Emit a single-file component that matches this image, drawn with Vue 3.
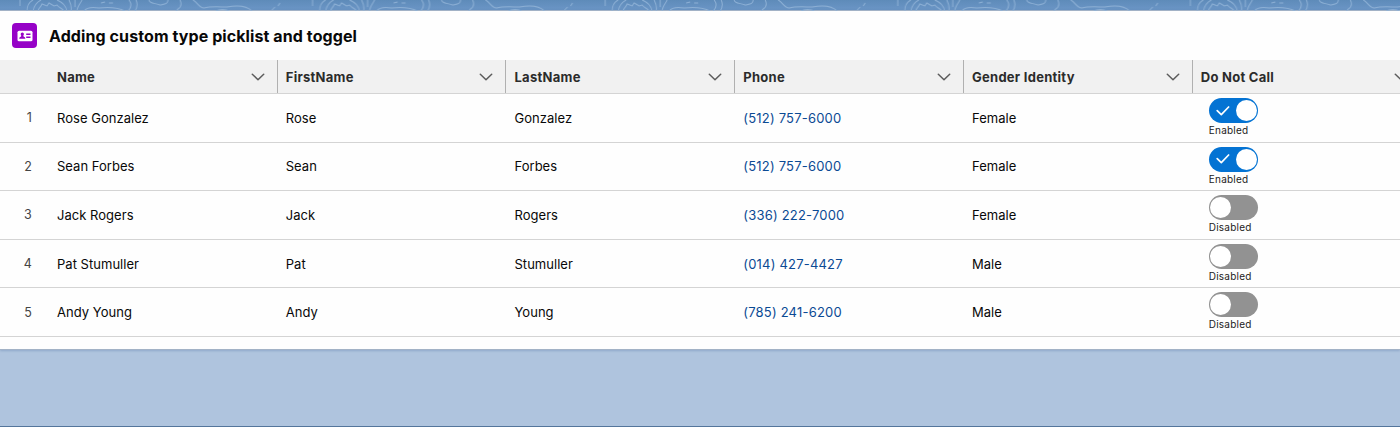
<template>
  <div class="page">
    <div class="banner">
      <svg width="1400" height="11" viewBox="0 0 1400 11">
        <defs>
          <pattern id="topo" x="0" y="0" width="292.6" height="11" patternUnits="userSpaceOnUse">
            <g fill="none" stroke="#8db0d5" stroke-width="1">
              <path d="M20 0v6M27 11C27 6 29 2 33 0M33 11C34 6 37 2 41 0M38 11C39 7 41 7 42 4L47 6L49 3L54 6L57 5C59 8 62 8 64 11M57 0C62 2 66 6 67 11" />
              <path d="M69 0C71 4 72 7 71 11M75 0v7M82 0C80 4 77 7 77 11M101 3l4-1M109 3h4M84 11C87 7 93 7 99 8C108 7 119 8 125 11M129 0C132 4 131 8 128 11M136 0C138 4 137 8 135 11" />
              <path d="M149 0C149 4 156 3 160 5C165 4 168 4 168 0M180 0C182 4 181 7 178 9L176 11M193 0C198 3 199 8 204 8C211 6 220 7 227 7C238 5 247 6 252 11M216 11C219 9 226 9 229 11M272 10l3-3M278 6l2-3" />
            </g>
          </pattern>
        </defs>
        <rect width="1400" height="11" fill="url(#topo)" />
      </svg>
    </div>

    <div class="card">
      <header class="card-header">
        <span class="card-icon">
          <svg width="16" height="12" viewBox="0 0 16 12">
            <rect x="0.5" y="0.7" width="15" height="10.6" rx="1.6" fill="#fff" />
            <path d="M5.3 2.4a1.6 1.6 0 0 1 1.6 1.7c0 1-.6 1.5-.6 2 0 .8 2.1.7 2.1 2.7H2.2c0-2 2.1-1.9 2.1-2.7 0-.5-.6-1-.6-2a1.6 1.6 0 0 1 1.6-1.7z" fill="#9602c7" />
            <path d="M9.2 4.3h4.3M9.2 7.2h4.3" stroke="#9602c7" stroke-width="1.5" />
          </svg>
        </span>
        <h2>Adding custom type picklist and toggel</h2>
      </header>

      <div class="table">
        <div class="row head">
          <div class="num"></div>
          <div v-for="col in columns" :key="col" class="th">
            <span>{{ col }}</span>
            <svg class="chevron" width="14" height="8" viewBox="0 0 14 8">
              <path d="M1.3 1.2L7 6.7l5.7-5.5" fill="none" stroke="#5c5c5c" stroke-width="1.5" stroke-linecap="round" stroke-linejoin="round" />
            </svg>
          </div>
        </div>

        <div v-for="(row, index) in rows" :key="row.name" class="row">
          <div class="num">{{ index + 1 }}</div>
          <div class="td">{{ row.name }}</div>
          <div class="td">{{ row.firstName }}</div>
          <div class="td">{{ row.lastName }}</div>
          <div class="td"><a class="phone">{{ row.phone }}</a></div>
          <div class="td">{{ row.gender }}</div>
          <div class="td toggle-cell" @click="row.doNotCall = !row.doNotCall">
            <span class="toggle" :class="{ on: row.doNotCall }">
              <svg v-if="row.doNotCall" class="check" width="14" height="10" viewBox="0 0 14 10">
                <path d="M1.2 4.6l4.1 4L12.6 1" fill="none" stroke="#fff" stroke-width="1.7" stroke-linecap="round" stroke-linejoin="round" />
              </svg>
              <span class="knob"></span>
            </span>
            <span class="toggle-label">{{ row.doNotCall ? 'Enabled' : 'Disabled' }}</span>
          </div>
        </div>
      </div>
    </div>
  </div>
</template>

<script setup>
import { ref } from 'vue';

const columns = ['Name', 'FirstName', 'LastName', 'Phone', 'Gender Identity', 'Do Not Call'];

const rows = ref([
  { name: 'Rose Gonzalez', firstName: 'Rose', lastName: 'Gonzalez', phone: '(512) 757-6000', gender: 'Female', doNotCall: true },
  { name: 'Sean Forbes', firstName: 'Sean', lastName: 'Forbes', phone: '(512) 757-6000', gender: 'Female', doNotCall: true },
  { name: 'Jack Rogers', firstName: 'Jack', lastName: 'Rogers', phone: '(336) 222-7000', gender: 'Female', doNotCall: false },
  { name: 'Pat Stumuller', firstName: 'Pat', lastName: 'Stumuller', phone: '(014) 427-4427', gender: 'Male', doNotCall: false },
  { name: 'Andy Young', firstName: 'Andy', lastName: 'Young', phone: '(785) 241-6200', gender: 'Male', doNotCall: false }
]);
</script>

<style>
body {
  margin: 0;
  overflow: hidden;
}
</style>

<style scoped>
.page {
  box-sizing: border-box;
  height: 427px;
  overflow: hidden;
  background: #afc4de;
  border-bottom: 1px solid #54759b;
  font-family: Inter, 'Liberation Sans', sans-serif;
  font-size: 13px;
  color: #080808;
}

.banner {
  height: 11px;
  background: linear-gradient(#5e8bb9, #6893c3 70%, #6690bf);
}

.banner svg {
  display: block;
}

.card {
  box-sizing: border-box;
  height: 338px;
  background: #fefefe;
  box-shadow: 0 0 0 1px #a2b2c6, 0 2px 2px #8fa9ca;
}

.card-header {
  display: flex;
  align-items: center;
  height: 49px;
  padding-left: 12px;
}

.card-icon {
  display: flex;
  align-items: center;
  justify-content: center;
  width: 25px;
  height: 25px;
  border-radius: 4px;
  background: #9602c7;
}

h2 {
  margin: 0 0 0 12px;
  font-size: 16px;
  line-height: 20px;
  font-weight: 700;
  letter-spacing: 0.09px;
}

.row {
  display: grid;
  grid-template-columns: 48.8px repeat(6, 228.75px);
  box-sizing: border-box;
  height: 48.6px;
  border-bottom: 1px solid #d4d4d4;
}

.head {
  height: 34px;
  background: #f1f1f1;
  font-weight: 700;
  letter-spacing: 0.27px;
  color: #2b2b2b;
}

.th {
  display: flex;
  align-items: center;
  justify-content: space-between;
  box-sizing: border-box;
  padding: 0 12px 0 8.2px;
  border-right: 1px solid #b0b0b0;
}

.num {
  display: flex;
  align-items: center;
  justify-content: flex-end;
  padding-right: 17px;
  font-size: 12.5px;
  color: #444;
}

.td {
  display: flex;
  align-items: center;
  padding-left: 8.2px;
  letter-spacing: 0.03px;
}

.phone {
  color: #0b4a94;
  letter-spacing: 0.2px;
}

.toggle-cell {
  flex-direction: column;
  align-items: flex-start;
  padding: 4px 0 0 16.2px;
}

.toggle {
  display: flex;
  align-items: center;
  box-sizing: border-box;
  width: 49px;
  height: 25px;
  padding: 0 1px;
  border-radius: 13px;
  background: #929292;
}

.toggle.on {
  justify-content: space-between;
  padding-left: 7px;
  background: #0473d3;
}

.knob {
  width: 21px;
  height: 21px;
  border-radius: 50%;
  background: #fff;
}

.toggle-label {
  margin-top: 1px;
  font-size: 10px;
  line-height: 13px;
  letter-spacing: 0.24px;
  color: #222;
}
</style>
